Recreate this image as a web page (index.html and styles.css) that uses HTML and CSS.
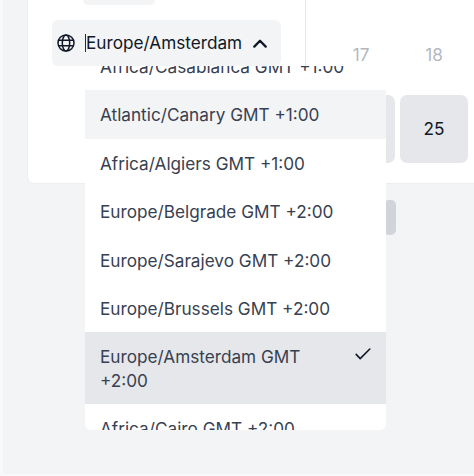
FILE: index.html
```html
<!DOCTYPE html>
<html lang="en">
<head>
<meta charset="utf-8">
<title>Timezone picker</title>
<link rel="stylesheet" href="styles.css">
</head>
<body>
<main class="card">
  <section class="side">
    <div class="chip"></div>
    <button class="tz-button" type="button">
      <svg class="globe" viewBox="0 0 18 18" width="18" height="18" fill="none" stroke="currentColor" stroke-width="1.5">
        <circle cx="9" cy="9" r="8"/>
        <ellipse cx="9" cy="9" rx="3.7" ry="8"/>
        <path d="M1.6 6.2h14.8M1.6 11.8h14.8"/>
      </svg>
      <span class="tz-label"><span class="caret"></span>Europe/Amsterdam</span>
      <svg class="chevron" viewBox="0 0 14 9" width="14" height="9" fill="none" stroke="currentColor" stroke-width="2.3" stroke-linecap="round" stroke-linejoin="round">
        <path d="M1.3 7.6 7 1.8l5.7 5.8"/>
      </svg>
    </button>
  </section>
  <section class="calendar">
    <div class="day-name">17</div>
    <div class="day-name">18</div>
    <div class="day-cell"></div>
    <div class="day-cell">25</div>
  </section>
</main>
<div class="scroll-thumb"></div>
<div class="listbox" role="listbox">
  <ul class="options">
    <li class="option">Africa/Casablanca GMT +1:00</li>
    <li class="option hover">Atlantic/Canary GMT +1:00</li>
    <li class="option">Africa/Algiers GMT +1:00</li>
    <li class="option">Europe/Belgrade GMT +2:00</li>
    <li class="option">Europe/Sarajevo GMT +2:00</li>
    <li class="option">Europe/Brussels GMT +2:00</li>
    <li class="option selected">
      <span class="option-text">Europe/Amsterdam GMT +2:00</span>
      <svg class="check" viewBox="0 0 16 12" width="16" height="12" fill="none" stroke="currentColor" stroke-width="1.6" stroke-linecap="round" stroke-linejoin="round">
        <path d="M1.2 6.4 5.2 10.6 14.8 1"/>
      </svg>
    </li>
    <li class="option">Africa/Cairo GMT +2:00</li>
  </ul>
</div>
</body>
</html>
```
FILE: styles.css
```css
* { box-sizing: border-box; }
html, body { margin: 0; height: 100%; }
body {
  position: relative;
  background: #f3f4f6;
  box-shadow: inset 3px -2px 0 #f8f9fa;
  font-family: Inter, "Liberation Sans", sans-serif;
  font-size: 17.2px;
  line-height: 24px;
  color: #374151;
  overflow: hidden;
}
.card {
  display: grid;
  grid-template-columns: 279px 1fr;
  margin-left: 27px;
  height: 184px;
  background: #fff;
  border: 1px solid #eceef1;
  border-width: 0 0 1px 1px;
  border-bottom-left-radius: 7px;
}
.side { padding-left: 24px; }
.side::after {
  content: "";
  position: absolute;
  left: 305px;
  top: 0;
  width: 1px;
  height: 66px;
  background: #e5e7eb;
}
.chip {
  width: 72px;
  height: 5px;
  margin-left: 31px;
  background: #f3f4f6;
  border-radius: 0 0 6px 6px;
}
.tz-button {
  display: flex;
  align-items: center;
  width: 229px;
  height: 46px;
  margin-top: 15px;
  padding: 0 14px 0 5px;
  border: 0;
  border-radius: 6px;
  background: #f3f4f6;
  color: #111827;
  font: inherit;
}
.globe { flex: none; }
.tz-label { position: relative; margin-left: 11px; flex: 1; text-align: left; white-space: nowrap; }
.caret {
  position: absolute;
  left: -1.5px;
  top: 3px;
  width: 1.5px;
  height: 18px;
  background: #1f2937;
}
.chevron { flex: none; }
.calendar {
  display: grid;
  grid-template-columns: 68px 68px;
  grid-template-rows: 68px 68px;
  column-gap: 5px;
  row-gap: 6px;
  padding: 21px 0 0 20px;
}
.day-name {
  display: flex;
  align-items: center;
  justify-content: center;
  color: #b4b8bf;
  height: 68px;
}
.day-cell {
  display: flex;
  align-items: center;
  justify-content: center;
  background: #e5e7eb;
  border-radius: 7px;
  color: #111827;
}
.listbox {
  position: absolute;
  left: 85px;
  top: 66px;
  width: 301px;
  height: 364px;
  overflow: hidden;
  background: #fff;
  border-radius: 0 0 6px 6px;
}
.options { list-style: none; margin: -24px 0 0; padding: 0; }
.option {
  display: flex;
  justify-content: space-between;
  align-items: flex-start;
  padding: 13px 15px 11px;
  min-height: 48.4px;
}
.hover { background: #f3f4f6; }
.selected { background: #e5e7eb; }
.option-text { width: 230px; }
.check { margin-top: 3px; color: #111827; }
.scroll-thumb {
  position: absolute;
  left: 386px;
  top: 200px;
  width: 10px;
  height: 35px;
  border-radius: 2px 5px 5px 2px;
  background: #d1d5db;
}
```
